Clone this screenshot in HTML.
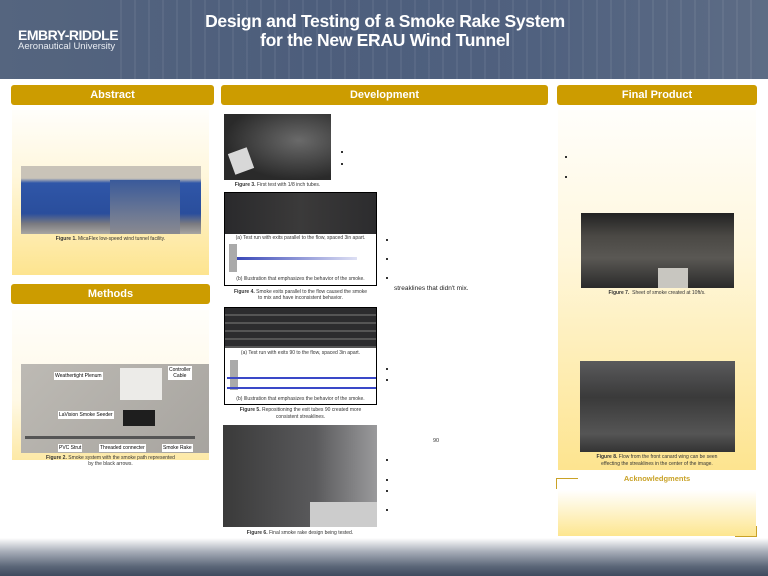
<!DOCTYPE html>
<html><head><meta charset="utf-8"><style>
*{margin:0;padding:0;box-sizing:border-box}
body{width:768px;height:576px;position:relative;overflow:hidden;background:#fff;font-family:"Liberation Sans",sans-serif}
.a{position:absolute}
.hdr{left:0;top:0;width:768px;height:79px;background:linear-gradient(90deg,#55657f 0%,#4d5e7c 40%,#50617f 70%,#5d6c85 100%)}
.bar{height:20px;background:#cc9c00;border-radius:3px;color:#fff;font-weight:bold;font-size:11px;text-align:center;line-height:20px;top:85px}
.pan{background:linear-gradient(#fffefb 0%,#fff7dc 40%,#fde48f 100%)}
.cap{font-size:5px;color:#333;text-align:center;font-family:"Liberation Sans",sans-serif}
.dot{width:2px;height:2px;background:#333}
.img{background:#333}
</style></head><body>
<div class="a hdr">
 <div class="a" style="left:120px;top:0;width:640px;height:79px;background:repeating-linear-gradient(90deg,rgba(255,255,255,0.06) 0 2px,transparent 2px 14px)"></div>
 <div class="a" style="left:18px;top:27px;color:#fff;font-weight:bold;font-size:14px;letter-spacing:-0.5px">EMBRY-RIDDLE</div>
 <div class="a" style="left:18px;top:41px;color:#e8ecf2;font-size:9.5px">Aeronautical University</div>
 <div class="a" style="left:130px;top:12px;width:510px;text-align:center;color:#fff;font-weight:bold;font-size:17.5px;line-height:19px;letter-spacing:-0.3px">Design and Testing of a Smoke Rake System<br>for the New ERAU Wind Tunnel</div>
</div>
<div class="a bar" style="left:11px;width:203px">Abstract</div>
<div class="a bar" style="left:221px;width:327px">Development</div>
<div class="a bar" style="left:557px;width:200px">Final Product</div>

<div class="a pan" style="left:12px;top:110px;width:197px;height:165px"></div>
<div class="a img" style="left:21px;top:166px;width:180px;height:68px;background:linear-gradient(#c9c3b8 0,#c9c3b8 18%,#2f56a8 25%,#2a4e9c 70%,#7a7a80 85%,#a8a6a2 100%)"></div>
<div class="a" style="left:110px;top:180px;width:70px;height:54px;background:linear-gradient(#3a5a9a,#8a8a90)"></div>
<div class="a cap" style="left:12px;top:236px;width:197px"><b>Figure 1.</b> MicaFlex low-speed wind tunnel facility.</div>

<div class="a bar" style="left:11px;top:284px;width:199px">Methods</div>
<div class="a pan" style="left:12px;top:310px;width:197px;height:150px;background:linear-gradient(#fffefb 0%,#fff9e6 60%,#fde9a6 100%)"></div>
<div class="a img" style="left:21px;top:364px;width:188px;height:89px;background:linear-gradient(135deg,#bdbab4,#a7a49f)"></div>
<div class="a" style="left:120px;top:368px;width:42px;height:32px;background:#ecebe8"></div>
<div class="a" style="left:123px;top:410px;width:32px;height:16px;background:#1e1e1e"></div>
<div class="a" style="left:25px;top:436px;width:170px;height:3px;background:#555"></div>
<div class="a" style="left:54px;top:372px;font-size:5px;background:#fff;padding:1px">Weathertight Plenum</div>
<div class="a" style="left:168px;top:366px;font-size:5px;background:#fff;padding:1px;text-align:center">Controller<br>Cable</div>
<div class="a" style="left:58px;top:411px;font-size:5px;background:#fff;padding:1px">LaVision Smoke Seeder</div>
<div class="a" style="left:58px;top:444px;font-size:5px;background:#fff;padding:1px">PVC Strut</div>
<div class="a" style="left:99px;top:444px;font-size:5px;background:#fff;padding:1px">Threaded connecter</div>
<div class="a" style="left:162px;top:444px;font-size:5px;background:#fff;padding:1px">Smoke Rake</div>
<div class="a cap" style="left:12px;top:455px;width:197px;line-height:6px"><b>Figure 2.</b> Smoke system with the smoke path represented<br>by the black arrows.</div>

<div class="a img" style="left:224px;top:114px;width:107px;height:66px;background:radial-gradient(ellipse at 70% 40%,#6a6a6a,#2a2a2a 70%)"></div>
<div class="a" style="left:231px;top:150px;width:20px;height:22px;background:#d8d8d8;transform:rotate(-20deg)"></div>
<div class="a cap" style="left:224px;top:182px;width:107px"><b>Figure 3.</b> First test with 1/8 inch tubes.</div>
<div class="a dot" style="left:341px;top:151px"></div><div class="a dot" style="left:341px;top:163px"></div>

<div class="a" style="left:224px;top:192px;width:153px;height:94px;border:1px solid #000;background:#fff"></div>
<div class="a img" style="left:225px;top:193px;width:151px;height:41px;background:linear-gradient(90deg,#2a2a2c,#3b3a3a 50%,#2c2c2e)"></div>
<div class="a cap" style="left:225px;top:235px;width:151px">(a) Test run with exits parallel to the flow, spaced 3in apart.</div>
<div class="a" style="left:229px;top:244px;width:8px;height:28px;background:#aaa"></div>
<div class="a" style="left:237px;top:257px;width:120px;height:3px;background:linear-gradient(90deg,#3a48b8,rgba(90,100,200,0.2))"></div>
<div class="a cap" style="left:225px;top:276px;width:151px">(b) Illustration that emphasizes the behavior of the smoke.</div>
<div class="a cap" style="left:224px;top:289px;width:153px;line-height:6px"><b>Figure 4.</b> Smoke exits parallel to the flow caused the smoke<br>to mix and have inconsistent behavior.</div>
<div class="a dot" style="left:386px;top:239px"></div><div class="a dot" style="left:386px;top:258px"></div><div class="a dot" style="left:386px;top:277px"></div>
<div class="a" style="left:394px;top:285px;font-size:6.5px;color:#222">streaklines that didn't mix.</div>

<div class="a" style="left:224px;top:307px;width:153px;height:98px;border:1px solid #000;background:#fff"></div>
<div class="a img" style="left:225px;top:308px;width:151px;height:40px;background:repeating-linear-gradient(#2c2c2e 0 6px,#555 6px 8px)"></div>
<div class="a cap" style="left:225px;top:350px;width:151px">(a) Test run with exits 90 to the flow, spaced 3in apart.</div>
<div class="a" style="left:230px;top:360px;width:8px;height:30px;background:#aaa"></div>
<div class="a" style="left:227px;top:377px;width:149px;height:2px;background:#3a48c8"></div>
<div class="a" style="left:227px;top:387px;width:149px;height:2px;background:#3a48c8"></div>
<div class="a cap" style="left:225px;top:396px;width:151px">(b) Illustration that emphasizes the behavior of the smoke.</div>
<div class="a cap" style="left:224px;top:407px;width:153px;line-height:7px"><b>Figure 5.</b> Repositioning the exit tubes 90 created more<br>consistent streaklines.</div>
<div class="a dot" style="left:386px;top:368px"></div><div class="a dot" style="left:386px;top:379px"></div>

<div class="a img" style="left:223px;top:425px;width:154px;height:102px;background:linear-gradient(90deg,#3a3a3a,#5a5a5c 60%,#9a9a9c)"></div>
<div class="a" style="left:310px;top:502px;width:67px;height:25px;background:#ccc"></div>
<div class="a cap" style="left:223px;top:530px;width:154px"><b>Figure 6.</b> Final smoke rake design being tested.</div>
<div class="a" style="left:433px;top:438px;font-size:5.5px;color:#333">90</div>
<div class="a dot" style="left:386px;top:459px"></div><div class="a dot" style="left:386px;top:479px"></div><div class="a dot" style="left:386px;top:490px"></div><div class="a dot" style="left:386px;top:509px"></div>

<div class="a pan" style="left:558px;top:110px;width:198px;height:360px"></div>
<div class="a dot" style="left:565px;top:156px"></div><div class="a dot" style="left:565px;top:176px"></div>
<div class="a img" style="left:581px;top:213px;width:153px;height:75px;background:linear-gradient(#222 0,#4a4844 30%,#5a5854 60%,#2a2a2a 100%)"></div>
<div class="a" style="left:658px;top:268px;width:30px;height:20px;background:#c8c6c0"></div>
<div class="a cap" style="left:558px;top:290px;width:198px"><b>Figure 7.</b>&nbsp; Sheet of smoke created at 10ft/s.</div>
<div class="a img" style="left:580px;top:361px;width:155px;height:91px;background:linear-gradient(#5a5a5c,#3a3a3a 40%,#555 80%,#333)"></div>
<div class="a cap" style="left:558px;top:454px;width:198px;line-height:7px"><b>Figure 8.</b> Flow from the front canard wing can be seen<br>effecting the streaklines in the center of the image.</div>

<div class="a" style="left:558px;top:490px;width:198px;height:46px;background:linear-gradient(#fff,#fde68f)"></div>
<div class="a" style="left:556px;top:478px;width:22px;height:11px;border-top:1px solid #c9a227;border-left:1px solid #c9a227"></div>
<div class="a" style="left:735px;top:526px;width:22px;height:11px;border-bottom:1px solid #c9a227;border-right:1px solid #c9a227"></div>
<div class="a" style="left:558px;top:474px;width:198px;text-align:center;color:#c9a227;font-weight:bold;font-size:7.5px">Acknowledgments</div>

<div class="a" style="left:0;top:538px;width:768px;height:38px;background:linear-gradient(#fff 0%,#a9afba 35%,#5b6678 75%,#3e4a5e 100%)"></div>
</body></html>
